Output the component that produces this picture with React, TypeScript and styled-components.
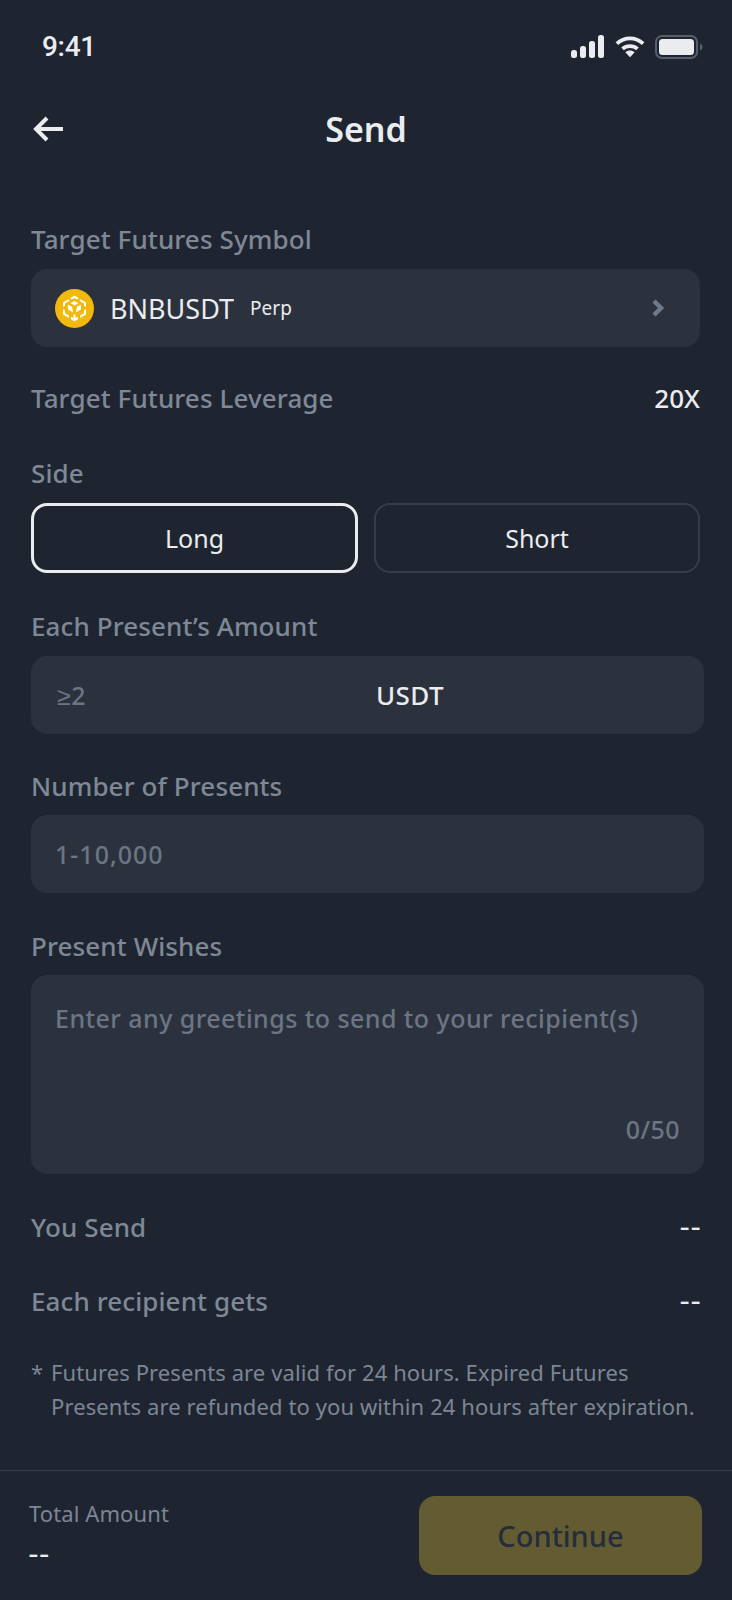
import React from "react";
import styled, { createGlobalStyle } from "styled-components";

const GlobalStyle = createGlobalStyle`
  html, body {
    margin: 0;
    padding: 0;
    background: #1e2530;
  }
  * {
    box-sizing: border-box;
  }
`;

/* ---------------- Page ---------------- */

const Page = styled.div`
  width: 732px;
  height: 1600px;
  background: #1e2530;
  font-family: "Noto Sans", "Liberation Sans", sans-serif;
  color: #eaecef;
  display: flex;
  flex-direction: column;
  overflow: hidden;
`;

/* ---------------- Status bar ---------------- */

const StatusBar = styled.div`
  height: 94px;
  padding: 0 29px 0 42px;
  display: flex;
  align-items: center;
  justify-content: space-between;
`;

const Clock = styled.div`
  font-family: "Roboto", sans-serif;
  font-size: 28px;
  font-weight: 500;
  line-height: 1;
  letter-spacing: -0.3px;
`;

const StatusIcons = styled.div`
  display: flex;
  align-items: center;
  gap: 10px;
`;

/* ---------------- Header ---------------- */

const Header = styled.div`
  height: 70px;
  padding: 0 32px;
  display: grid;
  grid-template-columns: 1fr auto 1fr;
  align-items: center;
`;

const BackButton = styled.div`
  display: flex;
  align-items: center;
`;

const Title = styled.div`
  font-size: 34px;
  font-weight: 600;
  line-height: 1;
`;

/* ---------------- Form ---------------- */

const Form = styled.div`
  flex: 1;
  padding: 60px 28px 0 31px;
  display: flex;
  flex-direction: column;
`;

const Label = styled.div`
  font-size: 26px;
  font-weight: 500;
  line-height: 30px;
  color: #7f8896;
  letter-spacing: 0.1px;
  margin-bottom: 14px;
`;

const Field = styled.div<{ $narrow?: boolean }>`
  height: 78px;
  background: #2b323e;
  border-radius: 16px;
  display: flex;
  align-items: center;
  margin-right: ${(p) => (p.$narrow ? 4 : 0)}px;
`;

const SymbolField = styled(Field)`
  margin-top: 1px;
  padding: 0 35px 0 24px;
`;

const SymbolName = styled.span`
  font-size: 27px;
  margin-left: 16px;
`;

const SymbolTag = styled.span`
  font-size: 19px;
  margin-left: 16px;
  flex: 1;
`;

const InfoRow = styled.div<{ $top: number }>`
  margin-top: ${(p) => p.$top}px;
  margin-right: 4px;
  display: flex;
  align-items: center;
  justify-content: space-between;
  height: 30px;
`;

const InfoLabel = styled(Label)`
  margin-bottom: 0;
`;

const InfoValue = styled.span`
  font-size: 26px;
  font-weight: 500;
`;

const Dashes = styled.span`
  font-family: "Roboto", sans-serif;
  font-size: 32px;
  line-height: 28px;
  letter-spacing: 2px;
  margin-right: -2px;
`;

const SideLabel = styled(Label)`
  margin-top: 45px;
  margin-bottom: 15px;
`;

const SideRow = styled.div`
  display: grid;
  grid-template-columns: 327px 326px;
  gap: 16px;
  margin-bottom: 38px;
`;

const SideButton = styled.div<{ $active?: boolean }>`
  height: 70px;
  border-radius: 16px;
  border: ${(p) => (p.$active ? "3px solid #eaecef" : "2px solid #363d4a")};
  display: flex;
  align-items: center;
  justify-content: center;
  font-size: 25px;
`;

const AmountField = styled(Field)`
  padding: 0 26px;
  position: relative;
  margin-top: 1px;
  margin-bottom: 37px;
`;

const Placeholder = styled.span<{ $wide?: boolean }>`
  font-size: 25px;
  font-weight: 500;
  color: #6b7584;
  letter-spacing: ${(p) => (p.$wide ? 1 : 0.45)}px;
`;

const Unit = styled.span`
  position: absolute;
  left: 345px;
  font-size: 26px;
  font-weight: 500;
  letter-spacing: 0.4px;
`;

const CountField = styled(Field)`
  padding: 0 24px;
  margin-bottom: 38px;
`;

const WishesField = styled.div`
  height: 199px;
  background: #2b323e;
  border-radius: 16px;
  padding: 26px 24px 28px;
  display: flex;
  flex-direction: column;
  justify-content: space-between;
`;

const Counter = styled(Placeholder)`
  align-self: flex-end;
`;

const Note = styled.div`
  margin-top: 39px;
  display: flex;
  gap: 10px;
  font-size: 22px;
  line-height: 34px;
  letter-spacing: 0.1px;
  color: #7d8695;
`;

const Star = styled.span`
  flex: none;
  width: 10px;
`;

/* ---------------- Footer ---------------- */

const Footer = styled.div`
  height: 130px;
  border-top: 1px solid #363d4a;
  padding: 25px 30px 0 29px;
  display: flex;
  justify-content: space-between;
  align-items: flex-start;
`;

const Total = styled.div`
  display: flex;
  flex-direction: column;
  gap: 13px;
  padding-top: 3px;
`;

const TotalLabel = styled.span`
  font-size: 22px;
  line-height: 28px;
  letter-spacing: 0.1px;
  color: #7d8695;
`;

const ContinueButton = styled.div`
  width: 283px;
  height: 79px;
  border-radius: 16px;
  background: #635b32;
  color: #262d3a;
  font-size: 29px;
  font-weight: 500;
  display: flex;
  align-items: center;
  justify-content: center;
`;

/* ---------------- Icons ---------------- */

const SignalIcon = () => (
  <svg width="34" height="24" viewBox="0 0 34 24">
    <rect x="0" y="15" width="6" height="8" rx="2.5" fill="#eaecef" />
    <rect x="9" y="11" width="6" height="12" rx="2.5" fill="#eaecef" />
    <rect x="18" y="6" width="6" height="17" rx="2.5" fill="#eaecef" />
    <rect x="27" y="0" width="6" height="23" rx="2.5" fill="#eaecef" />
  </svg>
);

const WifiIcon = () => (
  <svg width="30" height="24" viewBox="0 0 32 24" fill="none">
    <path d="M2 8.5C10 1 22 1 30 8.5" stroke="#eaecef" strokeWidth="4" />
    <path d="M8 14C12.5 10 19.5 10 24 14" stroke="#eaecef" strokeWidth="4" />
    <path d="M11 17.5C14 15 18 15 21 17.5L16 23Z" fill="#eaecef" />
  </svg>
);

const BatteryIcon = () => (
  <svg width="48" height="24" viewBox="0 0 48 24">
    <rect x="1" y="1" width="41" height="22" rx="6" fill="none" stroke="#565e6c" strokeWidth="2" />
    <rect x="4" y="4" width="35" height="16" rx="3.5" fill="#eaecef" />
    <path d="M45 8.5C47 9.5 47.5 10.5 47.5 12C47.5 13.5 47 14.5 45 15.5Z" fill="#565e6c" />
  </svg>
);

const BackIcon = () => (
  <svg width="32" height="26" viewBox="0 0 32 26" fill="none" stroke="#eaecef" strokeWidth="4">
    <path d="M31 13H4" />
    <path d="M15 2L4 13L15 24" />
  </svg>
);

const BnbIcon = () => (
  <svg width="39" height="39" viewBox="0 0 39 39" style={{ flex: "none" }}>
    <circle cx="19.5" cy="19.5" r="19.5" fill="#f0b90b" />
    <g fill="#fff">
      <path d="M19.5 6.5L24 9.2L22 10.4L19.5 9L17 10.4L15 9.2Z" />
      <path d="M26 10.4L31 13.4V18L29 16.8V14.6L24 11.6Z" />
      <path d="M13 10.4L15 11.6L10 14.6V16.8L8 18V13.4Z" />
      <path d="M19.5 12L23.5 14.3L19.5 16.6L15.5 14.3Z" />
      <path d="M13 15.5L17 17.8L18.2 23.5L13 20.5Z" />
      <path d="M26 15.5V20.5L20.8 23.5L22 17.8Z" />
      <path d="M8 20L10 21.2V24.3L14 26.6V29L8 25.4Z" />
      <path d="M31 20V25.4L25 29V26.6L29 24.3V21.2Z" />
      <path d="M16 27.7L18.4 29V25.6L20.6 25.6V29L23 27.7V30.2L19.5 32.5L16 30.2Z" />
    </g>
  </svg>
);

const ChevronIcon = () => (
  <svg width="14" height="18" viewBox="0 0 14 18" fill="none">
    <path d="M3 2L10 9L3 16" stroke="#6f7887" strokeWidth="4.5" />
  </svg>
);

/* ---------------- App ---------------- */

const App: React.FC = () => {
  return (
    <>
      <GlobalStyle />
      <Page>
        <StatusBar>
          <Clock>9:41</Clock>
          <StatusIcons>
            <SignalIcon />
            <WifiIcon />
            <BatteryIcon />
          </StatusIcons>
        </StatusBar>

        <Header>
          <BackButton>
            <BackIcon />
          </BackButton>
          <Title>Send</Title>
        </Header>

        <Form>
          <Label>Target Futures Symbol</Label>
          <SymbolField $narrow>
            <BnbIcon />
            <SymbolName>BNBUSDT</SymbolName>
            <SymbolTag>Perp</SymbolTag>
            <ChevronIcon />
          </SymbolField>

          <InfoRow $top={36}>
            <InfoLabel>Target Futures Leverage</InfoLabel>
            <InfoValue>20X</InfoValue>
          </InfoRow>

          <SideLabel>Side</SideLabel>
          <SideRow>
            <SideButton $active>Long</SideButton>
            <SideButton>Short</SideButton>
          </SideRow>

          <Label>Each Present’s Amount</Label>
          <AmountField>
            <Placeholder>≥2</Placeholder>
            <Unit>USDT</Unit>
          </AmountField>

          <Label>Number of Presents</Label>
          <CountField>
            <Placeholder $wide>1-10,000</Placeholder>
          </CountField>

          <Label>Present Wishes</Label>
          <WishesField>
            <Placeholder>Enter any greetings to send to your recipient(s)</Placeholder>
            <Counter>0/50</Counter>
          </WishesField>

          <InfoRow $top={38}>
            <InfoLabel>You Send</InfoLabel>
            <Dashes>--</Dashes>
          </InfoRow>
          <InfoRow $top={44}>
            <InfoLabel>Each recipient gets</InfoLabel>
            <Dashes>--</Dashes>
          </InfoRow>

          <Note>
            <Star>*</Star>
            <span>
              Futures Presents are valid for 24 hours. Expired Futures
              <br />
              Presents are refunded to you within 24 hours after expiration.
            </span>
          </Note>
        </Form>

        <Footer>
          <Total>
            <TotalLabel>Total Amount</TotalLabel>
            <Dashes>--</Dashes>
          </Total>
          <ContinueButton>Continue</ContinueButton>
        </Footer>
      </Page>
    </>
  );
};

export default App;
